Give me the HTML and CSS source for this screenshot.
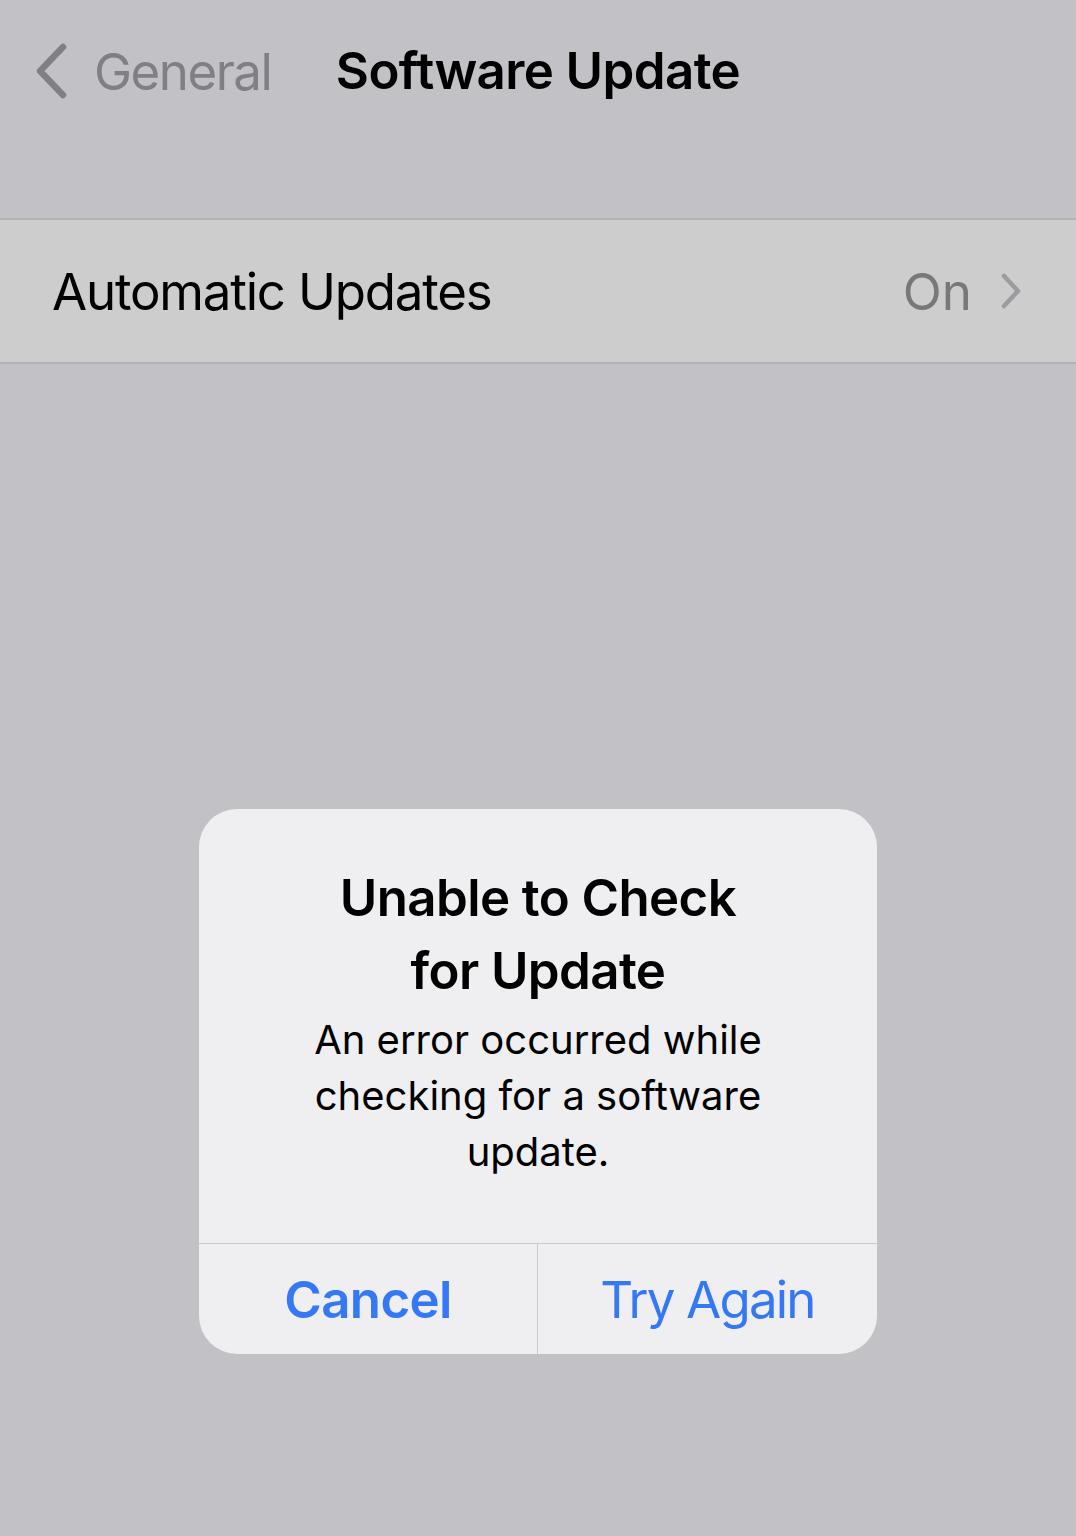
FILE: index.html
```html
<!DOCTYPE html>
<html>
<head>
<meta charset="utf-8">
<link rel="stylesheet" href="styles.css">
</head>
<body>
<div class="screen">
  <header class="nav">
    <div class="back">
      <svg class="back-chevron" width="36" height="60" viewBox="0 0 36 60">
        <path d="M30 6 L7 30 L30 54" fill="none" stroke="#808084" stroke-width="6.5" stroke-linecap="round" stroke-linejoin="round"/>
      </svg>
      <span class="back-label">General</span>
    </div>
    <h1 class="title">Software Update</h1>
    <div></div>
  </header>
  <div class="list">
    <div class="row">
      <span class="row-label">Automatic Updates</span>
      <span class="row-value">On</span>
      <svg class="row-chevron" width="22" height="38" viewBox="0 0 22 38">
        <path d="M4 4 L18 19 L4 34" fill="none" stroke="#9c9ca0" stroke-width="4.5" stroke-linecap="round" stroke-linejoin="round"/>
      </svg>
    </div>
  </div>
  <div class="alert">
    <div class="alert-body">
      <div class="alert-title">Unable to Check<br>for Update</div>
      <div class="alert-message">An error occurred while<br>checking for a software<br>update.</div>
    </div>
    <div class="alert-actions">
      <div class="action action-cancel">Cancel</div>
      <div class="action action-retry">Try Again</div>
    </div>
  </div>
</div>
</body>
</html>
```
FILE: styles.css
```css
html, body {
  margin: 0;
  padding: 0;
}
body {
  background: #c2c1c6;
  font-family: Inter, "Noto Sans", sans-serif;
  -webkit-font-smoothing: antialiased;
}
.screen {
  position: relative;
  width: 1076px;
  height: 1536px;
  overflow: hidden;
  background: #c2c1c6;
}
.nav {
  display: grid;
  grid-template-columns: 1fr auto 1fr;
  align-items: center;
  box-sizing: border-box;
  height: 220px;
  padding-bottom: 78px;
  border-bottom: 2px solid #b3b3b6;
}
.back {
  display: flex;
  align-items: center;
  padding-left: 33px;
  padding-top: 2px;
}
.back-chevron {
  display: block;
}
.back-label {
  margin-left: 25px;
  font-size: 51px;
  color: #808084;
  letter-spacing: -1.5px;
}
.title {
  margin: 0;
  font-size: 51px;
  font-weight: 600;
  color: #000;
  letter-spacing: -0.6px;
}
.list {
  background: #cdcdcd;
  border-bottom: 2px solid #b3b3b6;
}
.row {
  display: flex;
  align-items: center;
  height: 142px;
  padding: 0 54px 0 52px;
}
.row-label {
  flex: 1;
  font-size: 51px;
  color: #000;
  letter-spacing: -1.2px;
}
.row-value {
  font-size: 51px;
  color: #78787b;
  margin-right: 28px;
}
.row-chevron {
  display: block;
}
.alert {
  position: absolute;
  top: 809px;
  left: 199px;
  width: 678px;
  height: 545px;
  background: #efeff1;
  border-radius: 38px;
  overflow: hidden;
  display: flex;
  flex-direction: column;
}
.alert-body {
  flex: 1;
  padding: 52px 40px 0;
  text-align: center;
}
.alert-title {
  font-size: 51px;
  font-weight: 600;
  line-height: 73px;
  color: #000;
  letter-spacing: -0.6px;
}
.alert-message {
  font-size: 40px;
  line-height: 56px;
  color: #000;
  margin-top: 5px;
  letter-spacing: 0;
}
.alert-actions {
  display: grid;
  grid-template-columns: 1fr 1fr;
  height: 110px;
  border-top: 1.5px solid #c9c9cc;
}
.action {
  display: flex;
  align-items: center;
  justify-content: center;
  font-size: 51px;
  color: #3478f6;
  letter-spacing: -0.6px;
}
.action-cancel {
  font-weight: 600;
  border-right: 1.5px solid #c9c9cc;
}
.action-retry {
  letter-spacing: -1.8px;
}
```
